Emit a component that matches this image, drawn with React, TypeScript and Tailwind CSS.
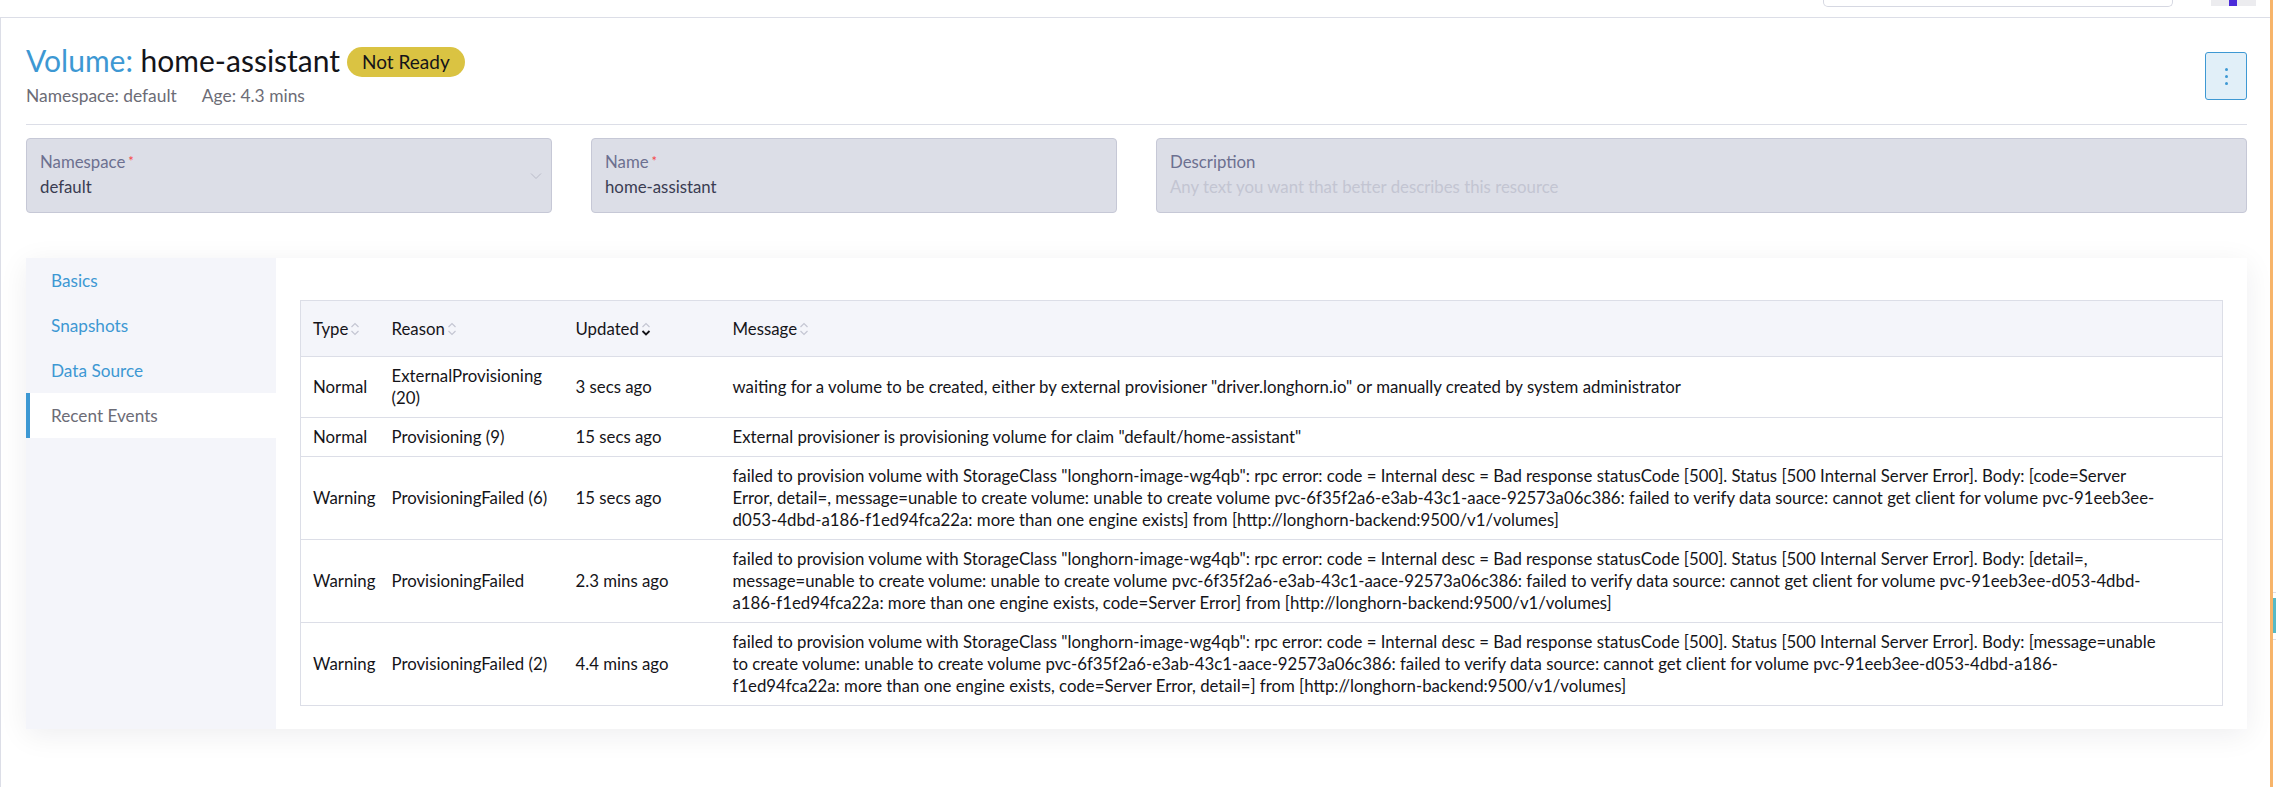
import React from 'react';

const events = [
  {
    type: 'Normal',
    reason: 'ExternalProvisioning (20)',
    updated: '3 secs ago',
    lines: [
      'waiting for a volume to be created, either by external provisioner "driver.longhorn.io" or manually created by system administrator',
    ],
  },
  {
    type: 'Normal',
    reason: 'Provisioning (9)',
    updated: '15 secs ago',
    lines: ['External provisioner is provisioning volume for claim "default/home-assistant"'],
  },
  {
    type: 'Warning',
    reason: 'ProvisioningFailed (6)',
    updated: '15 secs ago',
    lines: [
      'failed to provision volume with StorageClass "longhorn-image-wg4qb": rpc error: code = Internal desc = Bad response statusCode [500]. Status [500 Internal Server Error]. Body: [code=Server',
      'Error, detail=, message=unable to create volume: unable to create volume pvc-6f35f2a6-e3ab-43c1-aace-92573a06c386: failed to verify data source: cannot get client for volume pvc-91eeb3ee-',
      'd053-4dbd-a186-f1ed94fca22a: more than one engine exists] from [http://longhorn-backend:9500/v1/volumes]',
    ],
  },
  {
    type: 'Warning',
    reason: 'ProvisioningFailed',
    updated: '2.3 mins ago',
    lines: [
      'failed to provision volume with StorageClass "longhorn-image-wg4qb": rpc error: code = Internal desc = Bad response statusCode [500]. Status [500 Internal Server Error]. Body: [detail=,',
      'message=unable to create volume: unable to create volume pvc-6f35f2a6-e3ab-43c1-aace-92573a06c386: failed to verify data source: cannot get client for volume pvc-91eeb3ee-d053-4dbd-',
      'a186-f1ed94fca22a: more than one engine exists, code=Server Error] from [http://longhorn-backend:9500/v1/volumes]',
    ],
  },
  {
    type: 'Warning',
    reason: 'ProvisioningFailed (2)',
    updated: '4.4 mins ago',
    lines: [
      'failed to provision volume with StorageClass "longhorn-image-wg4qb": rpc error: code = Internal desc = Bad response statusCode [500]. Status [500 Internal Server Error]. Body: [message=unable',
      'to create volume: unable to create volume pvc-6f35f2a6-e3ab-43c1-aace-92573a06c386: failed to verify data source: cannot get client for volume pvc-91eeb3ee-d053-4dbd-a186-',
      'f1ed94fca22a: more than one engine exists, code=Server Error, detail=] from [http://longhorn-backend:9500/v1/volumes]',
    ],
  },
];

const tabs = ['Basics', 'Snapshots', 'Data Source', 'Recent Events'];

function SortIcon({ active = false }: { active?: boolean }) {
  return (
    <svg width="10" height="18" viewBox="0 0 10 18" className="ml-[2px] shrink-0">
      <path d="M1.5 7 L5 3.5 L8.5 7" fill="none" stroke="#c4c6d2" strokeWidth="1.2" />
      <path
        d="M1.5 11 L5 14.5 L8.5 11"
        fill="none"
        stroke={active ? '#141419' : '#c4c6d2'}
        strokeWidth={active ? 1.8 : 1.2}
      />
    </svg>
  );
}

function Field({
  label,
  value,
  required,
  placeholder,
  select,
  wide,
}: {
  label: string;
  value?: string;
  required?: boolean;
  placeholder?: string;
  select?: boolean;
  wide?: boolean;
}) {
  return (
    <div
      className={`relative h-[75px] rounded-[4px] border border-[#c6c8d6] bg-[#dcdee7] px-[13px] pt-[12px] ${
        wide ? 'col-span-2' : ''
      }`}
    >
      <div className="text-[16.8px] leading-[21px] text-[#6c7090]">
        {label}
        {required && <span className="ml-[3px] text-[13px] align-top text-[#f64747]">*</span>}
      </div>
      <div className={`mt-[4px] text-[16.8px] leading-[21px] ${value ? 'text-[#3a3c52]' : 'text-[#c3c5d2]'}`}>
        {value ?? placeholder}
      </div>
      {select && (
        <svg width="12" height="8" viewBox="0 0 12 8" className="absolute right-[9px] top-[33px]">
          <path d="M1 1.5 L6 6.5 L11 1.5" fill="none" stroke="#b9bbc8" strokeWidth="1" />
        </svg>
      )}
    </div>
  );
}

export default function App() {
  return (
    <div className="flex h-[787px] w-[2276px] overflow-hidden bg-white font-['Lato',sans-serif] text-[#141419]">
      <div className="flex w-[2270px] flex-col">
        {/* top bar, mostly scrolled out of view */}
        <div className="flex h-[18px] shrink-0 items-start border-b border-[#dcdee7]">
          <div className="ml-[1823px] h-[7px] w-[350px] rounded-b-[5px] border border-t-0 border-[#d6d8e2]" />
          <div className="ml-[38px] flex h-[6px] w-[45px] bg-[#ececef]">
            <div className="ml-[18px] h-full w-[8px] bg-[#4b2bd9]" />
          </div>
        </div>

        <div className="flex-1 border-l border-[#dcdee7] pl-[25px] pr-[23px] pt-[24px]">
          {/* title */}
          <div className="flex items-center justify-between border-b border-[#dcdee7] pb-[18px]">
            <div>
              <div className="flex items-center">
                <h1 className="text-[30px] leading-[36px]">
                  <span className="text-[#3d98d3]">Volume:</span> home-assistant
                </h1>
                <span className="ml-[7px] mt-[3px] rounded-full bg-[#dac342] px-[15px] text-[19px] leading-[30px] text-[#141419]">
                  Not Ready
                </span>
              </div>
              <div className="mt-[7px] flex gap-[25px] text-[17.4px] leading-[21px] text-[#6c6c76]">
                <span>Namespace: default</span>
                <span>Age: 4.3 mins</span>
              </div>
            </div>
            <button className="mt-[4px] flex h-[48px] w-[42px] flex-col items-center justify-center gap-[4px] rounded-[3px] border border-[#3d98d3] bg-[#e1eff8]">
              <span className="h-[3px] w-[3px] rounded-full bg-[#3d98d3]" />
              <span className="h-[3px] w-[3px] rounded-full bg-[#3d98d3]" />
              <span className="h-[3px] w-[3px] rounded-full bg-[#3d98d3]" />
            </button>
          </div>

          {/* fields */}
          <div className="mt-[13px] grid grid-cols-4 gap-x-[39px]">
            <Field label="Namespace" value="default" required select />
            <Field label="Name" value="home-assistant" required />
            <Field label="Description" placeholder="Any text you want that better describes this resource" wide />
          </div>

          {/* tabbed card */}
          <div className="mt-[45px] flex shadow-[0_6px_28px_rgba(20,20,40,0.07)]">
            <div className="w-[250px] shrink-0 bg-[#f4f5fa]">
              {tabs.map((t) => {
                const active = t === 'Recent Events';
                return (
                  <div
                    key={t}
                    className={
                      active
                        ? 'flex h-[45px] items-center border-l-[4px] border-[#3d98d3] bg-white pl-[21px] text-[17.2px] text-[#6c6c76]'
                        : 'flex h-[45px] items-center pl-[25px] text-[17.2px] text-[#3d98d3]'
                    }
                  >
                    {t}
                  </div>
                );
              })}
            </div>
            <div className="flex-1 bg-white px-[24px] pb-[23px] pt-[42px]">
              <table className="w-full table-fixed border-collapse border border-[#dcdee7] text-[16.8px] leading-[22px]">
                <colgroup>
                  <col className="w-[85px]" />
                  <col className="w-[184px]" />
                  <col className="w-[157px]" />
                  <col />
                </colgroup>
                <thead>
                  <tr className="h-[56px] bg-[#f4f5fa] text-left">
                    {['Type', 'Reason', 'Updated', 'Message'].map((h, i) => (
                      <th key={h} className={`font-normal ${i === 0 ? 'pl-[12px]' : 'pl-[6px]'}`}>
                        <span className="flex items-center">
                          {h}
                          <SortIcon active={h === 'Updated'} />
                        </span>
                      </th>
                    ))}
                  </tr>
                </thead>
                <tbody>
                  {events.map((e, i) => (
                    <tr key={i} className="border-t border-[#dcdee7]">
                      <td className="py-[8px] pl-[12px] align-middle">{e.type}</td>
                      <td className="py-[8px] pl-[6px] pr-[6px] align-middle">{e.reason}</td>
                      <td className="py-[8px] pl-[6px] align-middle">{e.updated}</td>
                      <td className="py-[8px] pl-[6px] pr-[6px] align-middle">
                        {e.lines.map((l, j) => (
                          <div key={j} className="whitespace-nowrap">
                            {l}
                          </div>
                        ))}
                      </td>
                    </tr>
                  ))}
                </tbody>
              </table>
            </div>
          </div>
        </div>
      </div>

      {/* right edge strip */}
      <div className="w-[3px] shrink-0 bg-[#f7b46a]" />
      <div className="flex w-[3px] shrink-0 flex-col">
        <div className="h-[592px]" />
        <div className="h-[1px] bg-[#dcdee7]" />
        <div className="h-[5px]" />
        <div className="h-[35px] bg-[#56b9c6]" />
        <div className="h-[6px]" />
        <div className="h-[1px] bg-[#dcdee7]" />
      </div>
    </div>
  );
}
